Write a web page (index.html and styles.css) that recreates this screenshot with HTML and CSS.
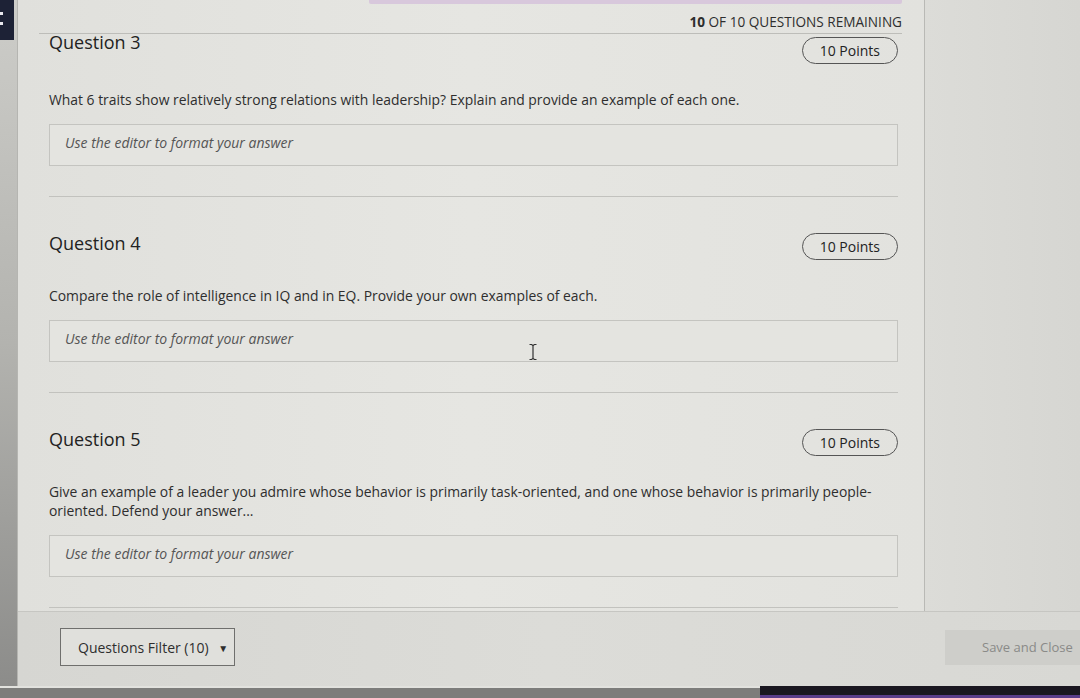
FILE: index.html
```html
<!DOCTYPE html>
<html lang="en">
<head>
<meta charset="utf-8">
<title>Questions</title>
<link rel="stylesheet" href="styles.css">
</head>
<body>
<div class="screen">
  <div class="left-strip">
    <div class="nav-block"><span class="dot"></span><span class="dot"></span></div>
  </div>
  <div class="app">
    <div class="main-row">
      <main class="content">
        <div class="progress"></div>
        <div class="remaining"><b>10</b> OF 10 QUESTIONS REMAINING</div>
        <section class="question first">
          <div class="q-head">
            <h2 class="q-title">Question 3</h2>
            <span class="pill">10 Points</span>
          </div>
          <p class="q-text">What 6 traits show relatively strong relations with leadership? Explain and provide an example of each one.</p>
          <div class="editor">Use the editor to format your answer</div>
          <div class="sep"></div>
        </section>
        <section class="question">
          <div class="q-head">
            <h2 class="q-title">Question 4</h2>
            <span class="pill">10 Points</span>
          </div>
          <p class="q-text">Compare the role of intelligence in IQ and in EQ. Provide your own examples of each.</p>
          <div class="editor">Use the editor to format your answer
            <svg class="ibeam" width="10" height="18" viewBox="0 0 10 18" aria-hidden="true"><path d="M1.5 1.5h2.2l1.3 1.2 1.3-1.2h2.2M5 2.7v12.6M1.5 16.5h2.2l1.3-1.2 1.3 1.2h2.2" fill="none" stroke="#333" stroke-width="1.2"/></svg>
          </div>
          <div class="sep"></div>
        </section>
        <section class="question">
          <div class="q-head">
            <h2 class="q-title">Question 5</h2>
            <span class="pill">10 Points</span>
          </div>
          <p class="q-text">Give an example of a leader you admire whose behavior is primarily task-oriented, and one whose behavior is primarily people-oriented. Defend your answer...</p>
          <div class="editor">Use the editor to format your answer</div>
          <div class="sep"></div>
        </section>
      </main>
      <aside class="side"></aside>
    </div>
    <footer class="footer">
      <button class="filter">Questions Filter (10) <span class="caret">&#9660;</span></button>
      <button class="save">Save and Close</button>
    </footer>
  </div>
</div>
<div class="bottom-bar">
  <div class="b-left"></div>
  <div class="b-right"></div>
</div>
</body>
</html>
```
FILE: styles.css
```css
* { box-sizing: border-box; }
html, body { margin: 0; padding: 0; }
body {
  width: 1080px;
  height: 698px;
  overflow: hidden;
  background: #d6d6d2;
  font-family: "Open Sans", "Noto Sans", sans-serif;
  color: #333;
}
.screen {
  display: flex;
  height: 686px;
}
.left-strip {
  width: 18px;
  flex: none;
  background: linear-gradient(#cdcdc9, #b3b3af 50%, #8c8c8a);
  border-right: 1px solid #b5b5b1;
}
.nav-block {
  width: 14px;
  height: 40px;
  background: #1d2236;
  display: flex;
  flex-direction: column;
  gap: 7px;
  padding-top: 12px;
}
.dot {
  display: block;
  width: 3px;
  height: 3px;
  background: #e8e8ee;
}
.app {
  flex: 1;
  display: flex;
  flex-direction: column;
  min-width: 0;
}
.main-row {
  display: flex;
  height: 612px;
  border-bottom: 1px solid #c6c6c2;
}
.content {
  width: 907px;
  flex: none;
  background: linear-gradient(90deg, #e0e0dc, #e6e6e2 50%, #e2e2de);
  border-right: 1px solid #b9b9b5;
  padding: 0 26px 0 31px;
  overflow: hidden;
}
.side {
  flex: 1;
  background: linear-gradient(90deg, #dcdcd8, #d6d6d2);
}
.progress {
  height: 4px;
  margin-left: 320px;
  margin-right: -4px;
  background: #d8c8dc;
  border-radius: 0 0 2px 2px;
}
.remaining {
  text-align: right;
  font-size: 13.6px;
  line-height: 20px;
  padding-top: 8px;
  padding-bottom: 1px;
  color: #2e2e2e;
  border-bottom: 1px solid #bdbdb9;
  margin-left: -10px;
  margin-right: -4px;
}
.remaining b { font-weight: 700; }
.question { display: flex; flex-direction: column; }
.question + .question .q-head { margin-top: 35px; }
.q-head {
  display: flex;
  justify-content: space-between;
  align-items: center;
  height: 28px;
  margin-top: 2px;
}
.q-title {
  margin: 0 0 6px;
  font-size: 18px;
  font-weight: 400;
  line-height: 24px;
  color: #222;
}
.first .q-title { margin-bottom: 16px; }
.pill {
  display: inline-flex;
  align-items: center;
  justify-content: center;
  height: 27px;
  padding: 0 17px;
  border: 1px solid #555;
  border-radius: 14px;
  font-size: 14px;
  color: #222;
}
.q-text {
  margin: 26px 0 0;
  font-size: 13.9px;
  line-height: 19px;
  color: #2e2e2e;
}
.editor {
  position: relative;
  margin-top: 15px;
  height: 42px;
  border: 1px solid #c4c4c0;
  background: #e4e4e0;
  padding: 8px 15px 0;
  font-size: 14px;
  line-height: 19px;
  font-style: italic;
  color: #555;
}
.ibeam {
  position: absolute;
  left: 478px;
  top: 22px;
}
.sep {
  margin-top: 30px;
  border-top: 1px solid #c2c2be;
}
.footer {
  flex: 1;
  display: flex;
  align-items: center;
  justify-content: space-between;
  padding: 0 0 4px 42px;
  background: linear-gradient(90deg, #d6d6d2, #dcdcd8 50%, #d8d8d4);
  overflow: hidden;
}
.filter {
  height: 38px;
  width: 175px;
  border: 1px solid #6f6f6d;
  background: #e0e0dc;
  font-family: inherit;
  font-size: 14px;
  color: #2e2e2e;
  padding: 0 0 0 17px;
  text-align: left;
}
.caret {
  font-size: 10px;
  margin-left: 6px;
  vertical-align: 1px;
}
.save {
  height: 35px;
  width: 140px;
  margin-right: -5px;
  border: none;
  background: #cececa;
  font-family: inherit;
  font-size: 13px;
  color: #8a8a88;
  text-align: left;
  padding: 0 0 0 37px;
}
.bottom-bar {
  display: flex;
  height: 12px;
}
.b-left {
  width: 760px;
  background: linear-gradient(#e2e2de 0, #e2e2de 2px, #7d7d7b 2px);
}
.b-right {
  flex: 1;
  background: linear-gradient(#1a1720 0, #1a1720 9px, #5a3c8a 9px);
}
```
